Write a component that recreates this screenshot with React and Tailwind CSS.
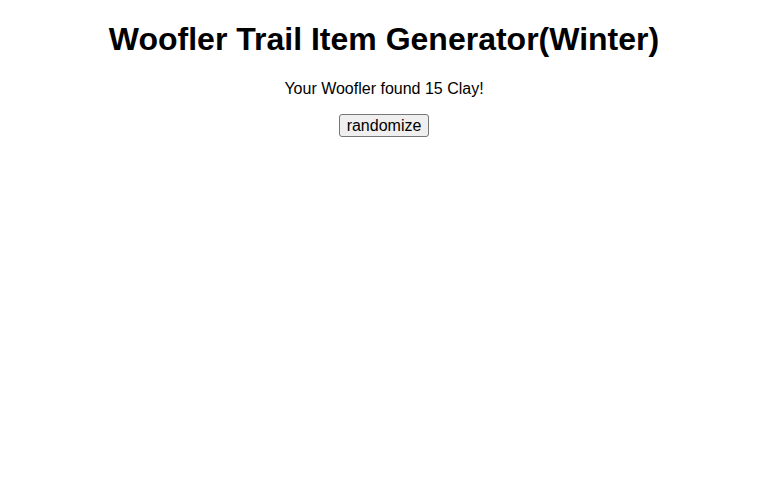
export default function App() {
  return (
    <div className="text-center text-black font-['Liberation_Sans',Arial,sans-serif] text-base">
      <h1 className="text-[32px] font-bold leading-[37px] my-[21.44px]">Woofler Trail Item Generator(Winter)</h1>
      <p className="my-4 leading-[18px]">Your Woofler found 15 Clay!</p>
      <button className="bg-[#efefef] border border-[#767676] rounded-[3px] px-[7px] py-[1px] text-base leading-[19px]">
        randomize
      </button>
    </div>
  );
}
